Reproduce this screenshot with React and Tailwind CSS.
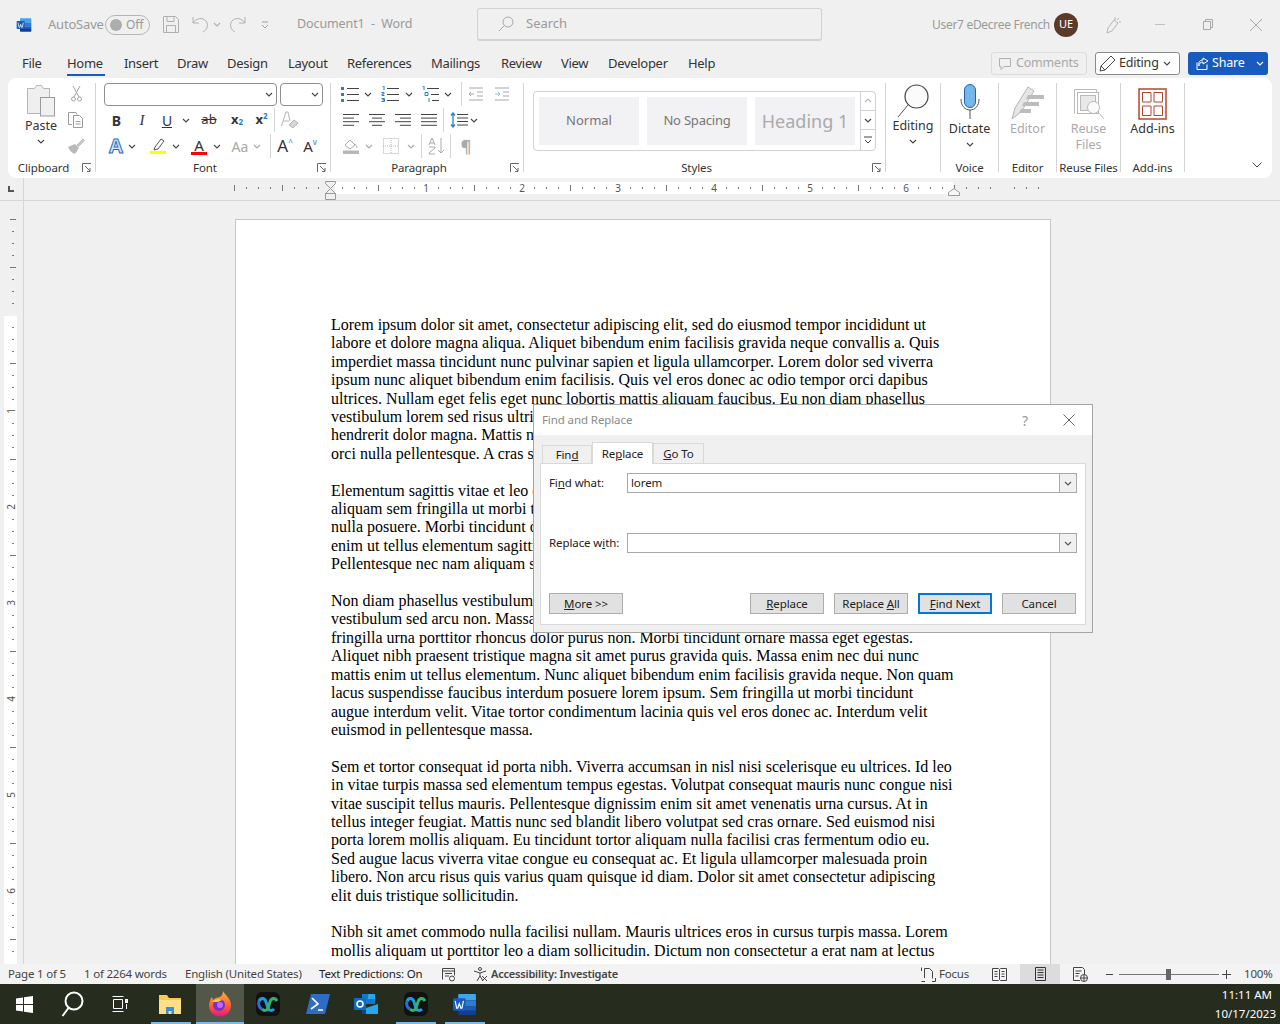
import React from "react";

const TABS = [
  ["File", "w-[45px]"],
  ["Home", "w-[57px]"],
  ["Insert", "w-[53px]"],
  ["Draw", "w-[50px]"],
  ["Design", "w-[61px]"],
  ["Layout", "w-[59px]"],
  ["References", "w-[84px]"],
  ["Mailings", "w-[70px]"],
  ["Review", "w-[60px]"],
  ["View", "w-[47px]"],
  ["Developer", "w-[80px]"],
  ["Help", "w-[40px]"],
];

// lines that run under the dialog stop where the dialog covers them
const PARAGRAPHS = [
  [
    "Lorem ipsum dolor sit amet, consectetur adipiscing elit, sed do eiusmod tempor incididunt ut",
    "labore et dolore magna aliqua. Aliquet bibendum enim facilisis gravida neque convallis a. Quis",
    "imperdiet massa tincidunt nunc pulvinar sapien et ligula ullamcorper. Lorem dolor sed viverra",
    "ipsum nunc aliquet bibendum enim facilisis. Quis vel eros donec ac odio tempor orci dapibus",
    "ultrices. Nullam eget felis eget nunc lobortis mattis aliquam faucibus. Eu non diam phasellus",
    "vestibulum lorem sed risus ultri",
    "hendrerit dolor magna. Mattis n",
    "orci nulla pellentesque. A cras s",
  ],
  [
    "Elementum sagittis vitae et leo d",
    "aliquam sem fringilla ut morbi t",
    "nulla posuere. Morbi tincidunt o",
    "enim ut tellus elementum sagitti",
    "Pellentesque nec nam aliquam s",
  ],
  [
    "Non diam phasellus vestibulum",
    "vestibulum sed arcu non. Massa",
    "fringilla urna porttitor rhoncus dolor purus non. Morbi tincidunt ornare massa eget egestas.",
    "Aliquet nibh praesent tristique magna sit amet purus gravida quis. Massa enim nec dui nunc",
    "mattis enim ut tellus elementum. Nunc aliquet bibendum enim facilisis gravida neque. Non quam",
    "lacus suspendisse faucibus interdum posuere lorem ipsum. Sem fringilla ut morbi tincidunt",
    "augue interdum velit. Vitae tortor condimentum lacinia quis vel eros donec ac. Interdum velit",
    "euismod in pellentesque massa.",
  ],
  [
    "Sem et tortor consequat id porta nibh. Viverra accumsan in nisl nisi scelerisque eu ultrices. Id leo",
    "in vitae turpis massa sed elementum tempus egestas. Volutpat consequat mauris nunc congue nisi",
    "vitae suscipit tellus mauris. Pellentesque dignissim enim sit amet venenatis urna cursus. At in",
    "tellus integer feugiat. Mattis nunc sed blandit libero volutpat sed cras ornare. Sed euismod nisi",
    "porta lorem mollis aliquam. Eu tincidunt tortor aliquam nulla facilisi cras fermentum odio eu.",
    "Sed augue lacus viverra vitae congue eu consequat ac. Et ligula ullamcorper malesuada proin",
    "libero. Non arcu risus quis varius quam quisque id diam. Dolor sit amet consectetur adipiscing",
    "elit duis tristique sollicitudin.",
  ],
  [
    "Nibh sit amet commodo nulla facilisi nullam. Mauris ultrices eros in cursus turpis massa. Lorem",
    "mollis aliquam ut porttitor leo a diam sollicitudin. Dictum non consectetur a erat nam at lectus",
  ],
];

const HTICKS = Array.from({ length: 68 }, (_, i) => 234 + i * 12);
const VTICKS = Array.from({ length: 62 }, (_, i) => 219 + i * 12);

// ---- small drawings ----
const Chev = ({ c = "#444" }) => (
  <svg width="8" height="5" viewBox="0 0 8 5">
    <path d="M1 1l3 3 3-3" fill="none" stroke={c} strokeWidth="1.1" />
  </svg>
);

const Launcher = () => (
  <svg width="10" height="10" viewBox="0 0 10 10" fill="none" stroke="#666">
    <path d="M.5 9V.5H9M3 3l5 5M8 5v3.500H5" />
  </svg>
);

const Cell = ({ cls, children }) => <div className={`flex shrink-0 items-center justify-center ${cls}`}>{children}</div>;
const VSep = ({ cls }) => <div className={`h-[24px] w-px shrink-0 bg-[#d4d4d4] ${cls}`} />;

const Lines = ({ rows }) => (
  <svg width="18" height="14" viewBox="0 0 18 14" stroke="#444">
    {rows.map(([x1, x2], i) => (
      <path key={i} d={`M${x1} ${1.5 + i * 3.6}H${x2}`} />
    ))}
  </svg>
);

const Bullets = () => (
  <svg width="18" height="16" viewBox="0 0 18 16">
    <path d="M0 1h3v3H0zM0 7h3v3H0zM0 13h3v3H0z" fill="#2b7cd3" />
    <path d="M6 2.500h12M6 8.500h12M6 14.500h12" stroke="#444" />
  </svg>
);

const Numbered = () => (
  <svg width="18" height="16" viewBox="0 0 18 16">
    <path d="M1 0h2v4M.5 6.500h2.500v1.500H1v1.500h2.500M.5 12.500h3v1.300h-2 2v1.700h-3" fill="none" stroke="#2b7cd3" />
    <path d="M6 2.500h12M6 8.500h12M6 14.500h12" stroke="#444" />
  </svg>
);

const Multilevel = () => (
  <svg width="18" height="16" viewBox="0 0 18 16">
    <path d="M1 0h2v4M4 6.500h3v3H4zM8 12v4" fill="none" stroke="#2b7cd3" />
    <path d="M6 2.500h12M10 8.500h8M11 14.500h7" stroke="#444" />
  </svg>
);

const IndentIcon = ({ flip }) => (
  <svg width="16" height="14" viewBox="0 0 16 14" stroke="#a6a6a6" fill="none">
    <path d="M1 1h14M9 5h6M9 9h6M1 13h14" />
    {flip ? <path d="M1 7h5M4 5l2 2-2 2" stroke="#9bbfe0" /> : <path d="M6 7H1M3 5L1 7l2 2" stroke="#a6a6a6" />}
  </svg>
);

const PasteIcon = () => (
  <svg width="28" height="32" viewBox="0 0 28 32">
    <path d="M.5 3.500h7l2-3h5l2 3h6v9h-6v16H.5z" fill="#efefef" stroke="#b5b5b5" />
    <rect x="13.500" y="12.500" width="14" height="18.500" fill="#f0f0f0" stroke="#9a9a9a" />
  </svg>
);

const ScissorsIcon = () => (
  <svg width="11" height="16" viewBox="0 0 11 16" fill="none" stroke="#a3a3a3">
    <path d="M2 0l6 11M9 0L3 11" />
    <circle cx="2.500" cy="13" r="2" />
    <circle cx="8.500" cy="13" r="2" />
  </svg>
);

const CopyIcon = () => (
  <svg width="16" height="16" viewBox="0 0 16 16" fill="none" stroke="#9c9c9c">
    <path d="M4 12.500H.5V.5H8l1 2" />
    <path d="M5.500 3.500h6l3 3v9h-9zM7.500 9.500h5M7.500 12h5" />
  </svg>
);

const PainterIcon = () => (
  <svg width="17" height="16" viewBox="0 0 17 16">
    <path d="M0 9l7-3 4 4-4 6C4 15 1 12 0 9z" fill="#b9b9b9" />
    <path d="M9 7l6-6 1.500 1.500-6 6z" fill="#cbcbcb" stroke="#a0a0a0" strokeWidth=".6" />
  </svg>
);

const ClearFormatIcon = () => (
  <svg width="18" height="18" viewBox="0 0 18 18" fill="none" stroke="#b5b5b5">
    <path d="M.5 15L5 1h2l2 9M2 10h6" />
    <path d="M8 14l5-5 4 3-5 5z" fill="#d6d6d6" />
  </svg>
);

const HighlightIcon = () => (
  <svg width="16" height="16" viewBox="0 0 16 16">
    <path d="M5 9l6-8 3 2-6 8-4 1z" fill="#fff" stroke="#555" />
    <rect y="13" width="16" height="3" fill="#ffff00" />
  </svg>
);

const ParaFill = () => (
  <svg width="16" height="16" viewBox="0 0 16 16" fill="none" stroke="#a8a8a8">
    <path d="M2 7l5-5 5 5-5 4z" />
    <path d="M12 6c1 1 2 2 2 4" />
    <rect y="12.500" width="16" height="3.500" fill="#b8b8b8" stroke="none" />
  </svg>
);

const BordersIcon = () => (
  <svg width="16" height="16" viewBox="0 0 16 16" fill="none" stroke="#b5b5b5" strokeDasharray="1 1">
    <rect x=".5" y=".5" width="15" height="15" />
    <path d="M8 0v16M0 8h16" />
  </svg>
);

const MagnifierIcon = () => (
  <svg width="32" height="34" viewBox="0 0 32 34" fill="none" stroke="#555">
    <circle cx="19.500" cy="12.500" r="11.500" fill="#fbfbfb" stroke="#444" strokeWidth="1.200" />
    <path d="M11 21L1 33" />
  </svg>
);

const MicIcon = () => (
  <svg width="20" height="36" viewBox="0 0 20 36">
    <rect x="4.500" y=".5" width="11" height="23" rx="5.500" fill="#77b6ea" stroke="#1a66b5" />
    <path d="M1 15c0 7 4 11 9 11s9-4 9-11" fill="none" stroke="#555" />
    <path d="M10 26v9" stroke="#555" />
  </svg>
);

const EditorIcon = () => (
  <svg width="34" height="34" viewBox="0 0 34 34">
    <path d="M1 33l3-11L17 1l6 4-13 21z" fill="#e6e6e6" stroke="#b4b4b4" />
    <path d="M17 9h16v4H15zM13 16h15v4H11zM10 23h10v4H8z" fill="#bcbcbc" />
  </svg>
);

const ReuseIcon = () => (
  <svg width="30" height="31" viewBox="0 0 30 31" fill="none" stroke="#b8b8b8">
    <path d="M.5.5h22v3M.5.5v24" />
    <rect x="3.500" y="3.500" width="21" height="21" />
    <rect x="6.500" y="6.500" width="15" height="15" fill="#e8e8e8" />
    <circle cx="19.500" cy="18.500" r="6" fill="#fafafa" />
    <path d="M24 23l6 7" />
  </svg>
);

const AddinsIcon = () => (
  <svg width="29" height="32" viewBox="0 0 29 32" fill="none">
    <rect x="1" y="1" width="27" height="30" stroke="#b7472a" strokeWidth="1.500" />
    <path d="M4.500 4.500h8.500v9.500H4.500zM16 4.500h8.500v9.500H16zM4.500 18h8.500v9.500H4.500zM16 18h8.500v9.500H16z" stroke="#b7472a" />
  </svg>
);

const WordIcon = ({ s = 16 }) => (
  <svg width={s} height={s} viewBox="0 0 24 24">
    <path d="M7 2h15a1 1 0 0 1 1 1v5H6V3a1 1 0 0 1 1-1z" fill="#41a5ee" />
    <rect x="6" y="8" width="17" height="6" fill="#2b7cd3" />
    <rect x="6" y="14" width="17" height="4" fill="#185abd" />
    <path d="M6 18h17v3a1 1 0 0 1-1 1H7a1 1 0 0 1-1-1z" fill="#103f91" />
    <rect x="1" y="6" width="12" height="12" rx="1" fill="#185abd" />
    <path d="M3 8.500l1.500 7h1L7 11l1.500 4.500h1l1.500-7" fill="none" stroke="#fff" strokeWidth="1.100" />
  </svg>
);

const WebexIcon = () => (
  <svg width="24" height="24" viewBox="0 0 24 24" fill="none">
    <rect width="24" height="24" rx="6" fill="#111" />
    <path d="M3 9c2-4 6-3 7 1l2 6c1 3 4 3 6 1" stroke="#1d9ce0" strokeWidth="3" />
    <path d="M21 9c-2-4-6-3-7 1l-2 6c-1 3-4 3-6 1" stroke="#2fb36d" strokeWidth="3" />
    <path d="M3 9c-1 3 0 7 3 8" stroke="#2b6de0" strokeWidth="3" />
  </svg>
);

const FirefoxIcon = () => (
  <svg width="24" height="26" viewBox="0 0 24 26">
    <defs>
      <linearGradient id="ff" x1="0" y1="0" x2="0" y2="1">
        <stop offset="0" stopColor="#ffb32c" />
        <stop offset=".6" stopColor="#ff5a36" />
        <stop offset="1" stopColor="#e31587" />
      </linearGradient>
    </defs>
    <path d="M15 0c1 3 8 7 8 14a11 11 0 0 1-22 1C1 12 2 8 4 6l1 3c2-2 5-3 7-3 2-1 3-3 3-6z" fill="url(#ff)" />
    <circle cx="11" cy="14" r="6" fill="#7d2fbf" />
    <circle cx="12" cy="14" r="3" fill="#b86bff" />
    <path d="M4 11c3-3 7-4 10-2l-4 2z" fill="#ffcb3d" />
  </svg>
);

const OutlookIcon = () => (
  <svg width="24" height="24" viewBox="0 0 24 24">
    <path d="M8 2h13v10H8z" fill="#0f78d4" />
    <path d="M14 2h7v5h-7z" fill="#28a8ea" />
    <path d="M8 12l8 6 8-6v10H8z" fill="#14447d" />
    <path d="M12 16l12-4v10H12z" fill="#28a8ea" />
    <rect x="0" y="6" width="12" height="12" rx="1" fill="#0f6cbd" />
    <circle cx="6" cy="12" r="3" fill="none" stroke="#fff" strokeWidth="1.500" />
  </svg>
);

const FolderIcon = () => (
  <svg width="24" height="24" viewBox="0 0 24 24">
    <path d="M1 3h8l2 3h12v16H1z" fill="#f8c850" />
    <rect x="1" y="8" width="22" height="14" fill="#ffdf85" />
    <path d="M8 15h8v7h-2.500v-3h-3v3H8z" fill="#3a8fd8" />
  </svg>
);

const PowershellIcon = () => (
  <svg width="24" height="22" viewBox="0 0 24 22">
    <path d="M5 1h19l-5 20H0z" fill="#2d6dc5" />
    <path d="M6 5l6 6-7 5M12 17h5" fill="none" stroke="#fff" strokeWidth="1.600" />
  </svg>
);

// ---- page pieces ----
function Group({ w, label, launcher, children }) {
  return (
    <div className={`flex shrink-0 ${w}`}>
      <div className="flex min-w-0 flex-1 flex-col">
        <div className="h-[81px] pt-[3px]">{children}</div>
        <div className={`relative flex h-[18px] items-center justify-center whitespace-nowrap text-[11.5px] tracking-[-0.1px] text-[#333] ${launcher ? "pr-[16px]" : ""}`}>
          {label}
          {launcher && (
            <span className="absolute right-[3px] top-[4px]">
              <Launcher />
            </span>
          )}
        </div>
      </div>
      <div className="mt-[5px] h-[89px] w-px bg-[#d4d4d4]" />
    </div>
  );
}

function BigButton({ icon, iconCls, text, cls, chev, textCls = "text-[#333]" }) {
  return (
    <div className={`flex flex-col items-center ${cls}`}>
      <div className={`flex items-center justify-center ${iconCls}`}>{icon}</div>
      {text.map((t) => (
        <div key={t} className={`h-[16px] whitespace-nowrap text-[12.5px] leading-[16px] ${textCls}`}>
          {t}
        </div>
      ))}
      {chev && (
        <div className="mt-[2px] flex h-[10px] items-center">
          <Chev />
        </div>
      )}
    </div>
  );
}

function TitleBar() {
  return (
    <div className="flex h-[44px] shrink-0 items-center pt-[5px] text-[13px] text-[#9a9a9a]">
      <div className="ml-[16px] w-[32px]">
        <WordIcon />
      </div>
      <span className="w-[57px] tracking-[-0.2px]">AutoSave</span>
      <div className="flex h-[20px] w-[45px] items-center rounded-full border border-[#b5b5b5] pl-[4px] text-[12px]">
        <span className="mr-[4px] h-[12px] w-[12px] rounded-full bg-[#adadad]" />
        Off
      </div>
      <svg className="ml-[13px]" width="16" height="17" viewBox="0 0 16 17" fill="none" stroke="#b0b0b0">
        <path d="M.5.5h12l3 3v13H.5zM4 .5v5h7v-5M3.500 16.500v-7h9v7" />
      </svg>
      <svg className="ml-[13px]" width="17" height="17" viewBox="0 0 17 17" fill="none" stroke="#b0b0b0">
        <path d="M1 1v6h6M1 7c3-5 10-6 13-2s1 9-3 11" />
      </svg>
      <div className="ml-[4px] mr-[8px]">
        <Chev c="#b0b0b0" />
      </div>
      <svg width="17" height="17" viewBox="0 0 17 17" fill="none" stroke="#b0b0b0">
        <path d="M16 1v6h-6M16 7C13 2 6 1 3 5s-1 9 3 11" />
      </svg>
      <svg className="ml-[15px]" width="8" height="8" viewBox="0 0 8 8" fill="none" stroke="#a0a0a0">
        <path d="M1 1h6M1 4l3 3 3-3" />
      </svg>
      <span className="ml-[28px] w-[180px] whitespace-pre text-[12.5px] tracking-[-0.1px]">Document1  -  Word</span>
      <div className="flex h-[33px] w-[345px] items-center rounded-[3px] border border-[#d2d2d2] border-b-2 bg-[#f0f0f0] pl-[20px]">
        <svg width="16" height="16" viewBox="0 0 16 16" fill="none" stroke="#a8a8a8">
          <circle cx="10" cy="6" r="5" />
          <path d="M6.500 9.500L1 15" />
        </svg>
        <span className="ml-[12px] text-[#9a9a9a]">Search</span>
      </div>
      <span className="ml-[110px] w-[122px] whitespace-nowrap text-[12px] tracking-[-0.3px]">User7 eDecree French</span>
      <div className="flex h-[24px] w-[24px] items-center justify-center rounded-full bg-[#5b3a29] text-[11px] text-white">UE</div>
      <svg className="ml-[28px]" width="16" height="18" viewBox="0 0 16 18" fill="none" stroke="#b5b5b5">
        <path d="M1 17l1-5 6-8 4 3-6 8zM9 1v3M13 2l-2 2M15 6h-2" />
      </svg>
      <div className="ml-[33px] h-px w-[10px] bg-[#c0c0c0]" />
      <svg className="ml-[38px]" width="10" height="11" viewBox="0 0 10 11" fill="none" stroke="#a8a8a8">
        <path d="M.5 2.500h7v8h-7zM2.500 2.500v-2h7v8h-2" />
      </svg>
      <svg className="ml-[37px]" width="12" height="12" viewBox="0 0 12 12" stroke="#a8a8a8">
        <path d="M0 0l12 12M12 0L0 12" />
      </svg>
    </div>
  );
}

function TabRow() {
  return (
    <div className="flex h-[34px] shrink-0 items-center pl-[22px] pt-[5px] text-[13px] text-[#333]">
      {TABS.map(([t, w]) => (
        <div key={t} className={`${w} relative shrink-0 whitespace-nowrap tracking-[-0.3px]`}>
          {t}
          {t === "Home" && <div className="absolute left-0 top-[20px] h-[2px] w-[38px] bg-[#185abd]" />}
        </div>
      ))}
      <div className="ml-auto flex items-center text-[12.5px] tracking-[-0.2px]">
        <div className="flex h-[23px] w-[96px] items-center rounded-[3px] border border-[#dcdcdc] pl-[7px] text-[#a8a8a8]">
          <svg width="12" height="12" viewBox="0 0 12 12" fill="none" stroke="#b0b0b0">
            <path d="M.5.5h11v8H5l-3 3v-3H.5z" />
          </svg>
          <span className="ml-[5px]">Comments</span>
        </div>
        <div className="ml-[8px] flex h-[23px] w-[85px] items-center rounded-[3px] border border-[#8a8a8a] bg-white pl-[3px]">
          <svg width="17" height="17" viewBox="0 0 17 17" fill="none" stroke="#444">
            <path d="M1 16l1-5L12 1l4 4L6 15zM2 11l4 4" />
          </svg>
          <span className="ml-[3px] mr-[4px]">Editing</span>
          <Chev />
        </div>
        <div className="ml-[8px] mr-[12px] flex h-[23px] w-[80px] items-center rounded-[3px] bg-[#185abd] pl-[8px] text-white">
          <svg width="13" height="13" viewBox="0 0 13 13" fill="none" stroke="#fff">
            <path d="M1 5.500v7h10v-5M7 1l5 3-5 3V5C4 5 3 7 3 9 2 5 4 3 7 3z" />
          </svg>
          <span className="ml-[3px]">Share</span>
          <span className="ml-[11px]">
            <Chev c="#fff" />
          </span>
        </div>
      </div>
    </div>
  );
}

function Ribbon() {
  return (
    <div className="mx-[8px] flex h-[100px] shrink-0 rounded-[8px] bg-white">
      <Group w="w-[88px]" label="Clipboard" launcher>
        <div className="flex">
          <BigButton cls="ml-[11px] w-[44px]" iconCls="mt-[3px] h-[34px]" icon={<PasteIcon />} text={["Paste"]} chev />
          <div className="flex w-[26px] flex-col">
            <Cell cls="h-[26px]"><ScissorsIcon /></Cell>
            <Cell cls="h-[26px]"><CopyIcon /></Cell>
            <Cell cls="h-[26px]"><PainterIcon /></Cell>
          </div>
        </div>
      </Group>

      <Group w="w-[235px]" label="Font" launcher>
        <div className="flex h-[26px] items-center pl-[8px]">
          <div className="flex h-[23px] w-[173px] items-center justify-end rounded-[4px] border border-[#8f8f8f] pr-[3px]"><Chev /></div>
          <div className="ml-[3px] flex h-[23px] w-[43px] items-center justify-end rounded-[4px] border border-[#8f8f8f] pr-[3px]"><Chev /></div>
        </div>
        <div className="flex h-[26px] items-center pl-[8px] text-[#333]">
          <Cell cls="w-[25px] text-[14px] font-bold">B</Cell>
          <Cell cls="w-[26px] font-['Liberation_Serif',serif] text-[15px] italic">I</Cell>
          <Cell cls="w-[24px] text-[14px] underline">U</Cell>
          <Cell cls="w-[14px]"><Chev /></Cell>
          <Cell cls="w-[32px] text-[13px] line-through">ab</Cell>
          <Cell cls="w-[24px] text-[13px] font-bold">x<sub className="text-[8px] text-[#2b7cd3]">2</sub></Cell>
          <Cell cls="w-[25px] text-[13px] font-bold">x<sup className="text-[8px] text-[#2b7cd3]">2</sup></Cell>
          <VSep cls="" />
          <Cell cls="w-[30px]"><ClearFormatIcon /></Cell>
        </div>
        <div className="flex h-[26px] items-center pl-[8px] text-[#333]">
          <Cell cls="w-[24px] text-[20px] font-bold text-[#cfe4f7] [-webkit-text-stroke:1px_#1f6fc0]">A</Cell>
          <Cell cls="w-[8px]"><Chev /></Cell>
          <Cell cls="ml-[10px] w-[24px]"><HighlightIcon /></Cell>
          <Cell cls="w-[12px]"><Chev /></Cell>
          <Cell cls="ml-[5px] w-[24px]">
            <div className="flex flex-col items-center text-[15px] leading-[14px]">
              A<div className="h-[3px] w-[16px] bg-[#ff0000]" />
            </div>
          </Cell>
          <Cell cls="w-[12px]"><Chev /></Cell>
          <Cell cls="ml-[5px] w-[24px] text-[14px] text-[#a8a8a8]">Aa</Cell>
          <Cell cls="w-[10px]"><Chev c="#a8a8a8" /></Cell>
          <VSep cls="ml-[8px]" />
          <Cell cls="ml-[2px] w-[24px] text-[17px]">A<sup className="text-[8px] text-[#2b7cd3]">^</sup></Cell>
          <Cell cls="ml-[1px] w-[24px] text-[15px]">A<sup className="text-[8px] text-[#2b7cd3]">v</sup></Cell>
        </div>
      </Group>

      <Group w="w-[193px]" label="Paragraph" launcher>
        <div className="flex h-[26px] items-center pl-[10px]">
          <Cell cls="w-[18px]"><Bullets /></Cell>
          <Cell cls="ml-[5px] w-[8px]"><Chev /></Cell>
          <Cell cls="ml-[9px] w-[18px]"><Numbered /></Cell>
          <Cell cls="ml-[6px] w-[8px]"><Chev /></Cell>
          <Cell cls="ml-[8px] w-[18px]"><Multilevel /></Cell>
          <Cell cls="ml-[5px] w-[8px]"><Chev /></Cell>
          <VSep cls="ml-[9px]" />
          <Cell cls="ml-[6px] w-[16px]"><IndentIcon /></Cell>
          <Cell cls="ml-[10px] w-[16px]"><IndentIcon flip /></Cell>
        </div>
        <div className="flex h-[26px] items-center pl-[11px]">
          <Cell cls="w-[18px]"><Lines rows={[[1, 17], [1, 12], [1, 17], [1, 12]]} /></Cell>
          <Cell cls="ml-[8px] w-[18px]"><Lines rows={[[1, 17], [4, 14], [1, 17], [4, 14]]} /></Cell>
          <Cell cls="ml-[8px] w-[18px]"><Lines rows={[[1, 17], [6, 17], [1, 17], [6, 17]]} /></Cell>
          <Cell cls="ml-[8px] w-[18px]"><Lines rows={[[1, 17], [1, 17], [1, 17], [1, 17]]} /></Cell>
          <VSep cls="ml-[5px]" />
          <Cell cls="ml-[6px] w-[18px]">
            <svg width="18" height="16" viewBox="0 0 18 16">
              <path d="M3 1v14M1 3.500L3 1l2 2.500M1 12.500L3 15l2-2.500" fill="none" stroke="#2b7cd3" strokeWidth="1.300" />
              <path d="M7 2.500h11M7 6h11M7 9.500h11M7 13h11" stroke="#444" />
            </svg>
          </Cell>
          <Cell cls="ml-[2px] w-[8px]"><Chev /></Cell>
        </div>
        <div className="flex h-[26px] items-center pl-[12px]">
          <Cell cls="w-[16px]"><ParaFill /></Cell>
          <Cell cls="ml-[6px] w-[8px]"><Chev c="#aaa" /></Cell>
          <Cell cls="ml-[10px] w-[16px]"><BordersIcon /></Cell>
          <Cell cls="ml-[8px] w-[8px]"><Chev c="#aaa" /></Cell>
          <VSep cls="ml-[6px]" />
          <Cell cls="ml-[5px] w-[20px]">
            <svg width="18" height="18" viewBox="0 0 18 18" fill="none" stroke="#aaa">
              <path d="M13 1v15M10 13l3 3 3-3" />
              <path d="M1 8l3-7 3 7M2 6h4M1 10h6v1l-6 5v1h6" />
            </svg>
          </Cell>
          <VSep cls="ml-[3px]" />
          <Cell cls="ml-[5px] w-[20px] text-[16px] font-bold text-[#aaa]">¶</Cell>
        </div>
      </Group>

      <Group w="w-[362px]" label="Styles" launcher>
        <div className="ml-[9px] mt-[10px] flex h-[60px] w-[343px] items-center rounded-[4px] border border-[#d2d2d2] pl-[5px]">
          <div className="flex h-[48px] w-[100px] items-center justify-center bg-[#f2f1f4] text-[13px] text-[#777]">Normal</div>
          <div className="ml-[8px] flex h-[48px] w-[100px] items-center justify-center whitespace-nowrap bg-[#f2f1f4] text-[13px] tracking-[-0.2px] text-[#777]">No Spacing</div>
          <div className="ml-[8px] flex h-[48px] w-[100px] items-center justify-center whitespace-nowrap bg-[#f2f1f4] text-[18px] text-[#aaa]">Heading 1</div>
          <div className="ml-[5px] flex h-[60px] w-[15px] flex-col border-l border-[#d2d2d2]">
            <Cell cls="h-[19px] rotate-180"><Chev c="#bbb" /></Cell>
            <Cell cls="h-[20px] border-y border-[#d2d2d2]"><Chev /></Cell>
            <Cell cls="h-[19px]">
              <svg width="8" height="8" viewBox="0 0 8 8" fill="none" stroke="#444">
                <path d="M0 1h8M1 4l3 3 3-3" />
              </svg>
            </Cell>
          </div>
        </div>
      </Group>

      <Group w="w-[55px]" label="">
        <BigButton cls="w-full" iconCls="mt-[3px] h-[34px]" icon={<MagnifierIcon />} text={["Editing"]} chev />
      </Group>
      <Group w="w-[58px]" label="Voice">
        <BigButton cls="w-full" iconCls="mt-[2px] h-[38px]" icon={<MicIcon />} text={["Dictate"]} chev />
      </Group>
      <Group w="w-[58px]" label="Editor">
        <BigButton cls="w-full" iconCls="mt-[3px] h-[37px]" icon={<EditorIcon />} text={["Editor"]} textCls="text-[#aaa]" />
      </Group>
      <Group w="w-[64px]" label="Reuse Files">
        <BigButton cls="w-full" iconCls="mt-[6px] h-[34px]" icon={<ReuseIcon />} text={["Reuse", "Files"]} textCls="text-[#aaa]" />
      </Group>
      <Group w="w-[64px]" label="Add-ins">
        <BigButton cls="w-full" iconCls="mt-[5px] h-[35px]" icon={<AddinsIcon />} text={["Add-ins"]} />
      </Group>
      <div className="ml-auto mr-[10px] self-end pb-[10px]">
        <svg width="10" height="6" viewBox="0 0 10 6" fill="none" stroke="#444">
          <path d="M.5.5L5 5 9.500.5" />
        </svg>
      </div>
    </div>
  );
}

function HorizontalRuler() {
  return (
    <div className="flex h-[23px] shrink-0 border-b border-[#d6d6d6]">
      <div className="flex w-[24px] shrink-0 items-center border-r border-[#d6d6d6] pl-[8px]">
        <div className="h-[6px] w-[6px] border-b-2 border-l-2 border-[#555]" />
      </div>
      <svg width="1256" height="22" viewBox="24 178 1256 22" className="shrink-0">
        <rect x="335" y="182" width="618" height="12" fill="#fff" />
        {HTICKS.map((x) => {
          const fromZero = x - 330;
          if (fromZero === 0 || (fromZero > 0 && fromZero % 96 === 0)) return null;
          const long = (x - 282) % 96 === 0 || x === 234;
          return <rect key={x} x={x} y={long ? 185 : 187} width="1" height={long ? 6 : 2} fill="#777" />;
        })}
        {[1, 2, 3, 4, 5, 6].map((n) => (
          <text key={n} x={330 + n * 96} y="192" textAnchor="middle" fontSize="10" fill="#555" fontFamily="Noto Sans">
            {n}
          </text>
        ))}
        <path d="M325.500 181.500h10v2l-5 5-5-5zM325.500 193.500l5-5 5 5v6h-10z" fill="#f0f0f0" stroke="#9a9a9a" />
        <path d="M325.500 193.500h10" stroke="#9a9a9a" />
        <path d="M948.500 195.500v-3l5.500-4 5.500 4v3z" fill="#f7f7f7" stroke="#9a9a9a" />
      </svg>
    </div>
  );
}

function VerticalRuler() {
  return (
    <div className="w-[24px] shrink-0 border-r border-[#d6d6d6]">
      <svg width="23" height="763" viewBox="0 201 23 763">
        <rect x="4" y="316" width="13" height="648" fill="#fff" />
        {VTICKS.map((y) => {
          if (y === 315 || (y > 315 && (y - 315) % 96 === 0)) return null;
          const long = (y - 267) % 96 === 0 || y === 219;
          return <rect key={y} x={long ? 10 : 12} y={y} width={long ? 6 : 2} height="1" fill="#777" />;
        })}
        {[1, 2, 3, 4, 5, 6].map((n) => (
          <text key={n} textAnchor="middle" fontSize="10" fill="#555" fontFamily="Noto Sans" transform={`translate(15 ${315 + n * 96}) rotate(-90)`}>
            {n}
          </text>
        ))}
      </svg>
    </div>
  );
}

function DocArea() {
  return (
    <div className="flex min-h-0 flex-1 overflow-hidden">
      <VerticalRuler />
      <div className="min-w-0 flex-1 pl-[211px] pt-[18px]">
        <div className="h-[800px] w-[816px] border border-[#c6c6c6] bg-white pl-[95px] pt-[96px] font-['Liberation_Serif',serif] text-[16px] leading-[18.4px] text-black">
          {PARAGRAPHS.map((lines, i) => (
            <div key={i} className="mb-[18.4px]">
              {lines.map((l) => (
                <div key={l} className="whitespace-nowrap">
                  {l}
                </div>
              ))}
            </div>
          ))}
        </div>
      </div>
    </div>
  );
}

function DialogButton({ children, cls = "border border-[#adadad]" }) {
  return <div className={`flex h-[21px] w-[74px] items-center justify-center whitespace-nowrap bg-[#e1e1e1] ${cls}`}>{children}</div>;
}

function ComboRow({ label, value, cls }) {
  return (
    <div className={`flex items-center pl-[8px] ${cls}`}>
      <div className="w-[78px] whitespace-nowrap">{label}</div>
      <div className="flex h-[20px] w-[450px] items-center border border-[#a9a9a9] bg-white pl-[3px]">
        <span className="flex-1">{value}</span>
        <div className="flex h-[18px] w-[17px] items-center justify-center border-l border-[#a9a9a9] bg-[#f0f0f0]">
          <Chev c="#555" />
        </div>
      </div>
    </div>
  );
}

function Dialog() {
  return (
    <div className="absolute left-[533px] top-[404px] flex h-[229px] w-[560px] flex-col border border-[#a5a5a5] bg-[#f0f0f0] text-[11.5px] tracking-[-0.1px] text-[#222]">
      <div className="flex h-[30px] shrink-0 items-center bg-white pl-[8px] text-[#8a8a8a]">
        <span className="flex-1 text-[11.5px]">Find and Replace</span>
        <span className="mr-[35px] text-[14px] text-[#999]">?</span>
        <svg className="mr-[17px]" width="12" height="12" viewBox="0 0 12 12" stroke="#666">
          <path d="M.5.5l11 11M11.500.5l-11 11" />
        </svg>
      </div>
      <div className="flex h-[28px] shrink-0 items-end pl-[8px]">
        <div className="flex h-[18px] w-[50px] items-center justify-center border border-b-0 border-[#d9d9d9] bg-[#f0f0f0]">
          <span>Fin<u>d</u></span>
        </div>
        <div className="z-10 -mb-px flex h-[22px] w-[61px] items-center justify-center border border-b-0 border-[#d9d9d9] bg-white">
          <span>Re<u>p</u>lace</span>
        </div>
        <div className="flex h-[20px] w-[51px] items-center justify-center border border-b-0 border-[#d9d9d9] bg-[#f0f0f0]">
          <span><u>G</u>o To</span>
        </div>
      </div>
      <div className="mx-[6px] h-[162px] border border-[#d9d9d9] bg-white pt-[9px]">
        <ComboRow label={<span>Fi<u>n</u>d what:</span>} value="lorem" />
        <ComboRow cls="mt-[40px]" label={<span>Replace w<u>i</u>th:</span>} value="" />
        <div className="mt-[40px] flex pl-[8px] pr-[9px]">
          <DialogButton><span><u>M</u>ore &gt;&gt;</span></DialogButton>
          <div className="ml-auto flex gap-[10px]">
            <DialogButton><span><u>R</u>eplace</span></DialogButton>
            <DialogButton><span>Replace <u>A</u>ll</span></DialogButton>
            <DialogButton cls="border-2 border-[#0078d7]"><span><u>F</u>ind Next</span></DialogButton>
            <DialogButton>Cancel</DialogButton>
          </div>
        </div>
      </div>
    </div>
  );
}

function StatusBar() {
  return (
    <div className="flex h-[20px] shrink-0 items-center bg-[#f3f3f3] pl-[8px] text-[11.5px] tracking-[-0.2px] text-[#444]">
      <span className="w-[76px]">Page 1 of 5</span>
      <span className="w-[101px]">1 of 2264 words</span>
      <span className="w-[134px] whitespace-nowrap">English (United States)</span>
      <span className="w-[122px] whitespace-nowrap text-[#222]">Text Predictions: On</span>
      <svg width="15" height="15" viewBox="0 0 15 15" fill="none" stroke="#444">
        <path d="M1.500 12.500v-11h12v7M1.500 4h12M4 6.500h7M4 9h4" />
        <circle cx="11" cy="11.500" r="2.500" />
      </svg>
      <svg className="ml-[17px]" width="15" height="15" viewBox="0 0 15 15" fill="none" stroke="#444">
        <circle cx="7" cy="2" r="1.500" />
        <path d="M1 4l6 2 6-2M7 6v3l-3 5M7 9l3 5M9 9l5 5M14 9l-5 5" />
      </svg>
      <span className="ml-[3px] whitespace-nowrap text-[11px] font-semibold">Accessibility: Investigate</span>
      <div className="ml-auto flex items-center">
        <svg width="15" height="15" viewBox="0 0 15 15" fill="none" stroke="#444">
          <path d="M.5 4V.5M.5 14.500H4M14.500 11v3.500H11M3.500 11V1.500h5l3 3v7" />
        </svg>
        <span className="ml-[3px] w-[53px] text-[11.5px]">Focus</span>
        <svg width="15" height="13" viewBox="0 0 15 13" fill="none" stroke="#444">
          <path d="M.5.5h6l1 1 1-1h6v12h-6l-1-1-1 1h-6zM7.500 1.500v10M2.500 3.500h3M2.500 6h3M2.500 8.500h3M9.500 3.500h3M9.500 6h3M9.500 8.500h3" />
        </svg>
        <div className="ml-[13px] flex h-[20px] w-[40px] items-center justify-center bg-[#dcdcdc]">
          <svg width="11" height="14" viewBox="0 0 11 14" fill="none" stroke="#333">
            <path d="M.5.5h10v13H.5zM2.500 3h6M2.500 5.500h6M2.500 8h6M2.500 10.500h6" />
          </svg>
        </div>
        <svg className="ml-[13px]" width="15" height="15" viewBox="0 0 15 15" fill="none" stroke="#444">
          <path d="M7 13.500H.5V.5h9l2 2v5M2.500 4h6M2.500 6.500h4M2.500 9h3" />
          <circle cx="11" cy="11" r="3.500" />
          <path d="M7.500 11h7M11 7.500v7" />
        </svg>
        <div className="ml-[18px] h-px w-[7px] bg-[#444]" />
        <div className="relative ml-[6px] h-px w-[100px] bg-[#777]">
          <div className="absolute left-[47px] top-[-5px] h-[11px] w-[5px] bg-[#666]" />
        </div>
        <svg className="ml-[3px]" width="9" height="9" viewBox="0 0 9 9" stroke="#444">
          <path d="M4.500 0v9M0 4.500h9" />
        </svg>
        <span className="ml-[13px] mr-[8px] w-[28px] whitespace-nowrap text-[11.5px]">100%</span>
      </div>
    </div>
  );
}

function TaskIcon({ children, cls = "", bar }) {
  return (
    <div className={`relative flex h-[40px] w-[48px] shrink-0 items-center justify-center ${cls}`}>
      {children}
      {bar && <div className={`absolute bottom-0 h-[2px] bg-[#76b9ed] ${bar}`} />}
    </div>
  );
}

function Taskbar() {
  return (
    <div className="flex h-[40px] shrink-0 items-center bg-[#272d1e] text-white">
      <TaskIcon>
        <svg width="17" height="17" viewBox="0 0 17 17" fill="#fff">
          <path d="M0 2.400l7-1v6.600H0zM8 1.200L17 0v8H8zM0 9h7v6.600l-7-1zM8 9h9v8l-9-1.200z" />
        </svg>
      </TaskIcon>
      <TaskIcon>
        <svg width="23" height="26" viewBox="0 0 23 26" fill="none" stroke="#fff" strokeWidth="2">
          <circle cx="13" cy="10" r="8.500" />
          <path d="M7.500 17L1.500 25" />
        </svg>
      </TaskIcon>
      <TaskIcon>
        <svg width="17" height="18" viewBox="0 0 17 18" fill="none" stroke="#fff">
          <path d="M.5 1.500h11M.5 16.500h11M1.500 4.500h9v9h-9z" />
          <rect x="13" y="4" width="3" height="4" fill="#fff" stroke="none" />
          <path d="M14.500 9v5" />
        </svg>
      </TaskIcon>
      <TaskIcon cls="ml-[2px]" bar="left-[5px] right-[3px]"><FolderIcon /></TaskIcon>
      <TaskIcon cls="ml-[2px] bg-[#53574a]" bar="left-0 right-0"><FirefoxIcon /></TaskIcon>
      <TaskIcon><WebexIcon /></TaskIcon>
      <TaskIcon cls="ml-[2px]"><PowershellIcon /></TaskIcon>
      <TaskIcon><OutlookIcon /></TaskIcon>
      <TaskIcon cls="ml-[2px]" bar="left-[4px] right-[4px]"><WebexIcon /></TaskIcon>
      <TaskIcon bar="left-[5px] right-[3px]"><WordIcon s={25} /></TaskIcon>
      <div className="ml-auto mr-[4px] flex flex-col items-end text-[11.5px] leading-[19px]">
        <span className="mr-[4px]">11:11 AM</span>
        <span>10/17/2023</span>
      </div>
    </div>
  );
}

export default function App() {
  return (
    <div className="relative flex h-[1024px] w-[1280px] flex-col overflow-hidden bg-[#f0f0f0] font-['Noto_Sans',sans-serif]">
      <TitleBar />
      <TabRow />
      <Ribbon />
      <HorizontalRuler />
      <DocArea />
      <StatusBar />
      <Taskbar />
      <Dialog />
    </div>
  );
}
